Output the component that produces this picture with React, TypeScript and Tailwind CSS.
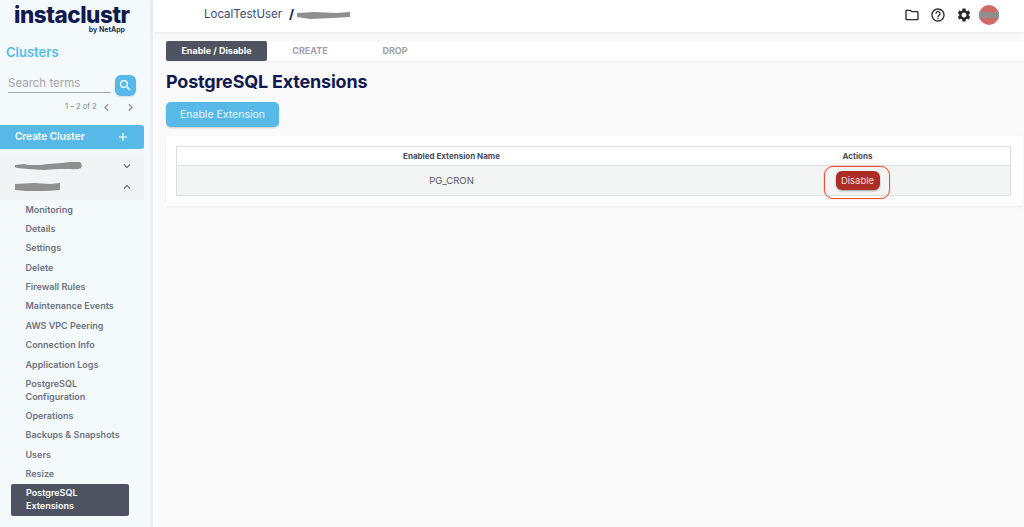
import React from "react";
import {
  MdAdd,
  MdChevronLeft,
  MdChevronRight,
  MdExpandLess,
  MdExpandMore,
  MdHelpOutline,
  MdOutlineFolder,
  MdSearch,
  MdSettings,
} from "react-icons/md";

const menuItems = [
  "Monitoring",
  "Details",
  "Settings",
  "Delete",
  "Firewall Rules",
  "Maintenance Events",
  "AWS VPC Peering",
  "Connection Info",
  "Application Logs",
  "PostgreSQL Configuration",
  "Operations",
  "Backups & Snapshots",
  "Users",
  "Resize",
];

// scribbled-over names, they are hand drawn blobs in the screenshot
const Smudge = ({ width, d }: { width: number; d: string }) => (
  <svg width={width} height="12" viewBox={`0 0 ${width} 12`} className="block shrink-0 blur-[0.5px]">
    <path d={d} fill="#8f8f8f" />
  </svg>
);

const Sidebar = () => (
  <aside className="flex w-[150px] shrink-0 flex-col bg-[#f4fafb]">
    <div className="flex h-[40px] shrink-0 flex-col items-start pt-[3.5px] pl-[14px]">
      <div className="text-[22.5px] leading-[22px] font-extrabold tracking-[-0.45px] text-[#11194f]">
        instaclustr
      </div>
      <div className="w-[111px] text-right text-[7px] leading-[8px] font-bold text-[#2c3050]">
        by NetApp
      </div>
    </div>
    <div className="mt-[4px] shrink-0 pl-[6px] text-[13px] leading-[16px] font-semibold text-[#56b9e8]">
      Clusters
    </div>
    <div className="mt-[15px] flex shrink-0 items-start pl-[8px]">
      <div className="h-[18px] w-[103px] border-b border-[#a9adb3] text-[11.5px] leading-[16px] text-[#a2a5a9]">
        Search terms
      </div>
      <div className="ml-[4px] flex h-[21px] w-[21px] items-center justify-center rounded-[6px] bg-[#56b9e8] text-white shadow-sm">
        <MdSearch size={15} />
      </div>
    </div>
    <div className="mt-[1px] flex h-[20px] shrink-0 items-center pl-[65px] text-[7.5px] text-[#7b7f85]">
      <span className="w-[34px]">1 – 2 of 2</span>
      <MdChevronLeft size={15} className="text-[#8a8e92]" />
      <MdChevronRight size={15} className="ml-[9px] text-[#8a8e92]" />
    </div>
    <div className="mt-[8px] flex h-[24px] w-[144px] shrink-0 items-center justify-between rounded-r-[3px] bg-[#56b9e8] pr-[14px] pb-[1px] pl-[15px] text-[10px] font-semibold text-white">
      <span>Create Cluster</span>
      <MdAdd size={14} />
    </div>
    <div className="mt-[4px] flex w-[144px] shrink-0 flex-col bg-[#f0f4f5] pt-[2px] pb-[3px]">
      <div className="flex h-[21px] items-center justify-between pr-[10px] pl-[14px]">
        <Smudge
          width={69}
          d="M1 5 L10 4 L14 5 L26 5 L34 4 L48 3 L56 2 L66 2 Q69 5 67 8 Q64 10 56 9 L44 9 L30 10 L14 9 L3 8 Q0 7 1 5 Z"
        />
        <MdExpandMore size={14} className="text-[#5f6368]" />
      </div>
      <div className="flex h-[21px] items-center justify-between pr-[10px] pl-[14px]">
        <Smudge width={46} d="M1 3 L20 2 L36 3 L46 2 L46 9 L32 10 L12 10 L1 9 Z" />
        <MdExpandLess size={14} className="text-[#5f6368]" />
      </div>
    </div>
    <nav className="flex shrink-0 flex-col text-[9px] leading-[12.5px] font-semibold text-[#6d7180]">
      {menuItems.map((item) => (
        <div key={item} className="w-[125px] pt-[3.5px] pb-[3.4px] pl-[25.5px]">
          {item}
        </div>
      ))}
      <div className="ml-[11px] w-[118px] rounded-[2px] bg-[#4f5361] py-[3.5px] pr-[20px] pl-[15px] text-white">
        PostgreSQL Extensions
      </div>
    </nav>
  </aside>
);

const TopBar = () => (
  <header className="flex h-[32px] shrink-0 items-center bg-white pr-[25px] pb-[2px] pl-[51px] shadow-[0_1px_3px_rgba(0,0,0,0.07)]">
    <span className="text-[11.5px] text-[#3d4670]">LocalTestUser</span>
    <span className="ml-[7px] text-[13px] font-bold text-[#11194f]">/</span>
    <span className="ml-[2px]">
      <Smudge width={55} d="M1 4 L18 3 L40 4 L54 3 L54 8 L36 9 L14 10 L1 8 Z" />
    </span>
    <div className="ml-auto flex items-center gap-[8px] text-[#2a2a2a]">
      <MdOutlineFolder size={16} />
      <MdHelpOutline size={16} className="ml-[2px]" />
      <MdSettings size={16} className="ml-[2px]" />
      <div className="-ml-[1px] flex h-[20px] w-[20px] items-center justify-center rounded-full bg-[#cf6a6a]">
        <div className="h-[6px] w-[20px] bg-[#8f8f8f]" />
      </div>
    </div>
  </header>
);

const App: React.FC = () => {
  return (
    <div className="flex h-[527px] w-[1024px] overflow-hidden bg-[#fafafa] font-['Inter',sans-serif]">
      <Sidebar />
      <div className="w-[3px] shrink-0 bg-[#eceeef]" />
      <main className="flex min-w-0 flex-1 flex-col">
        <TopBar />
        <div className="flex flex-col pl-[13px]">
          <div className="mt-[9px] flex h-[20px] items-center bg-white text-[9px] font-bold shadow-[0_1px_3px_rgba(0,0,0,0.06)]">
            <div className="flex h-[20px] w-[101px] items-center justify-center rounded-[2px] bg-[#4f5361] text-white">
              Enable / Disable
            </div>
            <div className="w-[86px] text-center text-[#a0a2a6]">CREATE</div>
            <div className="w-[84px] text-center text-[#a0a2a6]">DROP</div>
          </div>
          <h1 className="mt-[9px] text-[18px] leading-[24px] font-bold tracking-[-0.2px] text-[#11194f]">
            PostgreSQL Extensions
          </h1>
          <button className="mt-[8px] h-[25px] w-[113px] rounded-[5px] bg-[#56b9e8] text-[10.5px] text-[#e8f6fd] shadow-[0_1px_2px_rgba(0,0,0,0.2)]">
            Enable Extension
          </button>
          <section className="mt-[9px] mr-[1px] h-[70px] bg-white py-[10px] pr-[12px] pl-[10px] shadow-[0_1px_3px_rgba(0,0,0,0.06)]">
            <div className="border border-[#dcdfe0] text-center">
              <div className="grid h-[19px] grid-cols-[549px_263px_1fr] items-center border-b border-[#dcdfe0] text-[8px] font-bold text-[#4a4d5c]">
                <div>Enabled Extension Name</div>
                <div>Actions</div>
              </div>
              <div className="grid h-[29px] grid-cols-[549px_263px_1fr] items-center bg-[#f3f5f4] text-[9.5px] text-[#55585f]">
                <div className="pt-[1px]">PG_CRON</div>
                <div className="relative flex justify-center">
                  <button className="h-[19px] w-[44px] rounded-[6px] bg-[#ad2d26] pt-[1px] text-[9.5px] text-[#f5dcda] shadow-[0_1px_2px_rgba(0,0,0,0.35)]">
                    Disable
                  </button>
                  <div className="absolute top-[-5px] left-[98px] h-[33px] w-[66px] rounded-[9px] border border-[#ee4f37] shadow-[0_0_1px_#ee4f37]" />
                </div>
              </div>
            </div>
          </section>
        </div>
      </main>
    </div>
  );
};

export default App;
